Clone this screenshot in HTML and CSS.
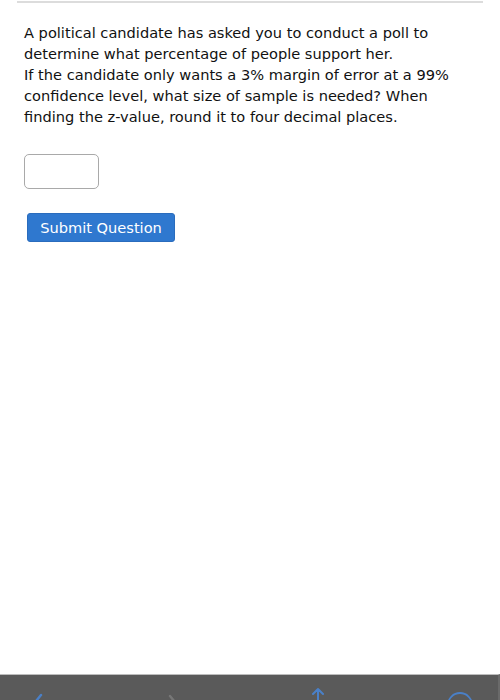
FILE: index.html
```html
<!DOCTYPE html>
<html>
<head>
<meta charset="utf-8">
<link rel="stylesheet" href="styles.css">
</head>
<body>
<div class="page">
  <div class="content">
    <hr class="rule">
    <p class="question">A political candidate has asked you to conduct a poll to determine what percentage of people support her.<br>If the candidate only wants a 3% margin of error at a 99% confidence level, what size of sample is needed? When finding the z-value, round it to four decimal places.</p>
    <input class="answer" type="text">
    <div class="actions"><button class="submit">Submit Question</button></div>
  </div>
  <div class="toolbar">
    <svg class="tb-icon back" width="20" height="26" viewBox="0 0 20 26"><path d="M14 2 L5 13 L14 24" fill="none" stroke="#4a80c8" stroke-width="2.4" stroke-linecap="round" stroke-linejoin="round"/></svg>
    <svg class="tb-icon fwd" width="20" height="26" viewBox="0 0 20 26"><path d="M6 2 L15 13 L6 24" fill="none" stroke="#777" stroke-width="2.4" stroke-linecap="round" stroke-linejoin="round"/></svg>
    <svg class="tb-icon share" width="30" height="30" viewBox="0 0 30 30"><path d="M15 3 V20 M10 8 L15 3 L20 8 M10 16 H5 V32 H25 V16 H20" fill="none" stroke="#4a80c8" stroke-width="2" stroke-linecap="round" stroke-linejoin="round"/></svg>
    <svg class="tb-icon circle" width="30" height="26" viewBox="0 0 30 26"><circle cx="15" cy="16" r="12" fill="none" stroke="#4a80c8" stroke-width="1.8"/></svg>
  </div>
</div>
</body>
</html>
```
FILE: styles.css
```css
html, body {
  margin: 0;
  padding: 0;
  background: #ffffff;
}
.page {
  width: 500px;
  height: 700px;
  display: flex;
  flex-direction: column;
  overflow: hidden;
}
.content {
  flex: 1;
  padding: 0 17px 0 17px;
  font-family: "DejaVu Sans", Verdana, sans-serif;
  color: #111;
}
.rule {
  margin: 1px 0 0 0;
  border: none;
  border-top: 2px solid #dcdcdc;
  height: 0;
}
.question {
  margin: 19px 20px 0 7px;
  font-size: 14.6px;
  line-height: 21px;
}
.answer {
  display: block;
  margin: 27px 0 0 7px;
  width: 75px;
  height: 35px;
  box-sizing: border-box;
  border: 1.5px solid #a9a9a9;
  border-radius: 5px;
  background: #fff;
  padding: 0;
}
.actions {
  margin: 24px 0 0 10px;
}
.submit {
  background: #2f78cf;
  color: #fff;
  border: 1px solid #2a6cbd;
  border-radius: 3px;
  font-family: "DejaVu Sans", Verdana, sans-serif;
  font-size: 14.6px;
  height: 29px;
  width: 148px;
  padding: 0;
}
.toolbar {
  height: 25px;
  background: #5a5a5a;
  border-top: 1px solid #bdbdbd;
  border-right: 2px solid #6a6a6a;
  overflow: hidden;
  position: relative;
}
.tb-icon {
  position: absolute;
}
.back { left: 27px; top: 18px; }
.fwd { left: 164px; top: 19px; }
.share { left: 303px; top: 11px; }
.circle { left: 445px; top: 14px; }
```
